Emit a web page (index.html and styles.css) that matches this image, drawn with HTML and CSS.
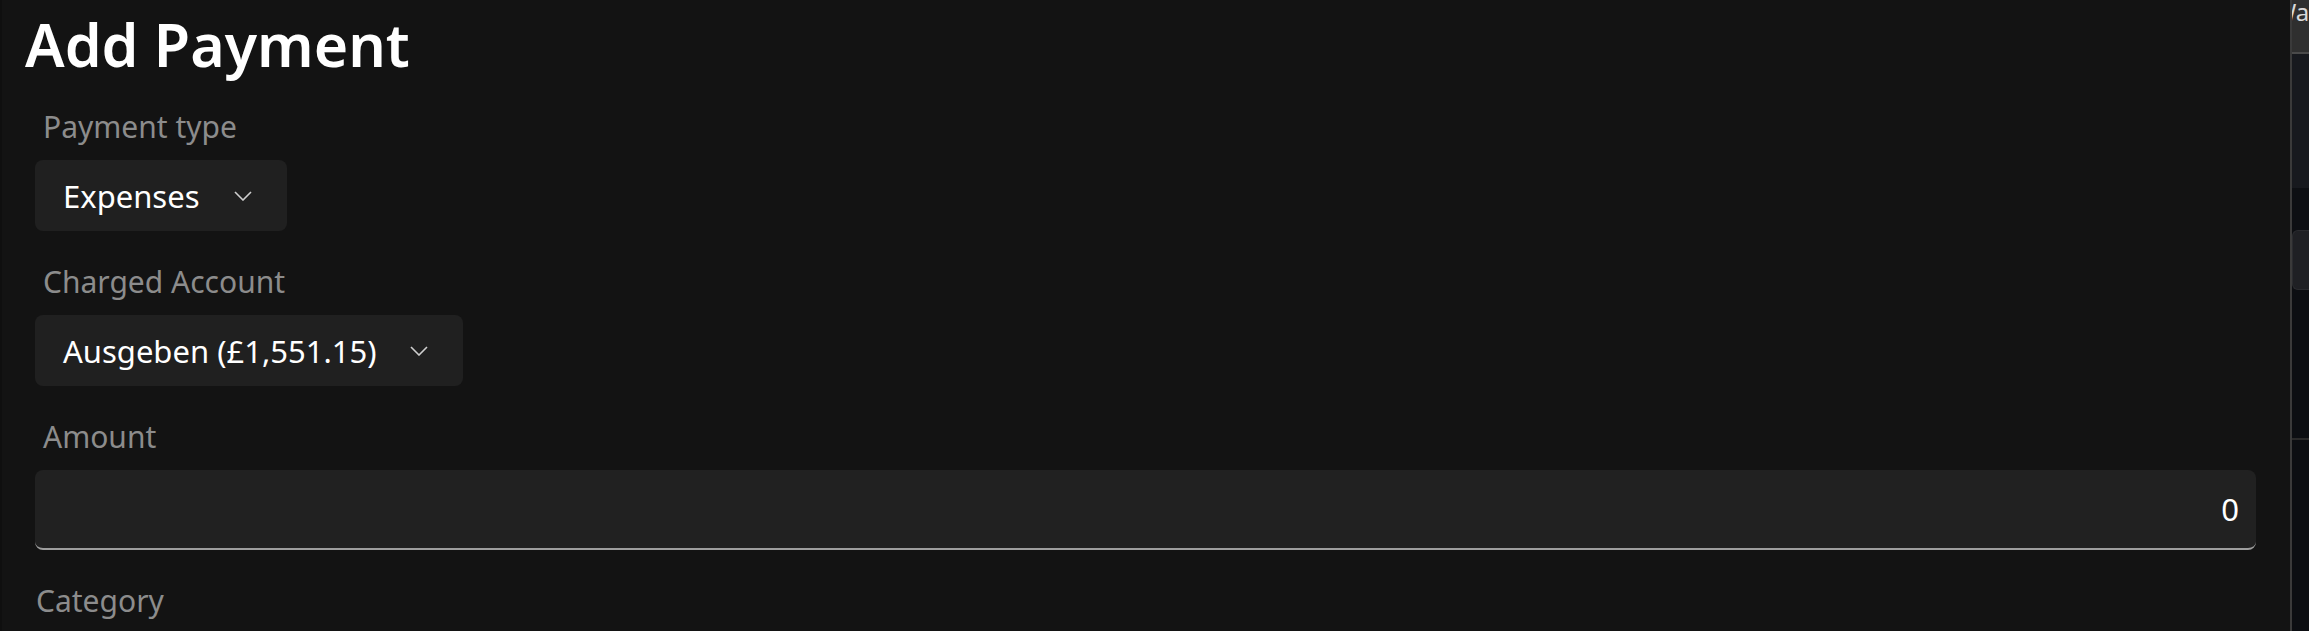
FILE: index.html
```html
<!DOCTYPE html>
<html lang="en">
<head>
<meta charset="utf-8">
<title>Add Payment</title>
<link rel="stylesheet" href="styles.css">
</head>
<body>
<div class="screen">
  <main class="dialog">
    <h1 class="title">Add Payment</h1>
    <div class="form">
      <div class="field">
        <div class="label">Payment type</div>
        <div class="select">
          <span class="select-text">Expenses</span>
          <svg class="chev" width="18" height="10" viewBox="0 0 18 10"><path d="M1 1 L9 9 L17 1" fill="none" stroke="#cfcfcf" stroke-width="1.6"/></svg>
        </div>
      </div>
      <div class="field">
        <div class="label">Charged Account</div>
        <div class="select">
          <span class="select-text">Ausgeben (£1,551.15)</span>
          <svg class="chev" width="18" height="10" viewBox="0 0 18 10"><path d="M1 1 L9 9 L17 1" fill="none" stroke="#cfcfcf" stroke-width="1.6"/></svg>
        </div>
      </div>
      <div class="field">
        <div class="label">Amount</div>
        <div class="textbox"><span class="value">0</span></div>
      </div>
      <div class="field field-category">
        <div class="label">Category</div>
      </div>
    </div>
  </main>
  <div class="divider"></div>
  <aside class="side">
    <div class="side-head"><span class="side-title">Wa</span></div>
    <div class="side-a"></div>
    <div class="side-b"></div>
    <div class="side-card"></div>
    <div class="side-c"></div>
    <div class="side-d"></div>
  </aside>
</div>
</body>
</html>
```

FILE: styles.css
```css
html, body {
  margin: 0;
  padding: 0;
  background: #131313;
  overflow: hidden;
}
body {
  font-family: "Noto Sans", "Open Sans", sans-serif;
  color: #ffffff;
}
.screen {
  display: flex;
  width: 2309px;
  height: 631px;
}
.dialog {
  flex: 1;
  border-left: 2px solid #0f0f0f;
  padding-left: 23px;
  box-sizing: border-box;
  overflow: hidden;
}
.title {
  margin: 0;
  font-size: 59px;
  font-weight: 600;
  line-height: 88px;
  letter-spacing: 0;
}
.form {
  padding-top: 18px;
  padding-left: 10px;
  padding-right: 34px;
}
.field {
  display: flex;
  flex-direction: column;
  align-items: flex-start;
  margin-bottom: 30px;
}
.label {
  font-size: 30px;
  line-height: 42px;
  color: #8c8c8c;
  padding-left: 8px;
  margin-bottom: 12px;
}
.select {
  display: flex;
  align-items: center;
  height: 71px;
  box-sizing: border-box;
  background: #202020;
  border-radius: 8px;
  padding: 0 35px 0 28px;
  gap: 34px;
}
.select-text {
  font-size: 31px;
  color: #ffffff;
}
.chev {
  display: block;
}
.textbox {
  align-self: stretch;
  height: 80px;
  box-sizing: border-box;
  background: #212121;
  border-radius: 8px;
  border-bottom: 2px solid #9e9e9e;
  display: flex;
  align-items: center;
  justify-content: flex-end;
  padding-right: 17px;
}
.value {
  font-size: 31px;
}
.field-category .label {
  padding-left: 1px;
}
.divider {
  width: 2px;
  background: #3a3a3a;
}
.side {
  width: 17px;
  display: flex;
  flex-direction: column;
  background: #0c0e12;
  overflow: hidden;
}
.side-head {
  height: 52px;
  flex-shrink: 0;
  background: #2f2f2f;
  border-bottom: 2px solid #4a4a4a;
  overflow: hidden;
}
.side-title {
  display: block;
  color: #d8d8d8;
  font-size: 24px;
  line-height: 24px;
  white-space: nowrap;
  margin-left: -18px;
}
.side-a {
  height: 134px;
  background: #17191e;
}
.side-b {
  height: 42px;
  background: #0d0f13;
}
.side-card {
  height: 60px;
  background: #1f2024;
  border: 1px solid #2a2b2f;
  border-right: 0;
  border-radius: 6px 0 0 6px;
  box-sizing: border-box;
}
.side-c {
  height: 148px;
  background: #0c0e12;
  border-bottom: 2px solid #2a2a2a;
}
.side-d {
  flex: 1;
  background: #0c0e12;
}
```
